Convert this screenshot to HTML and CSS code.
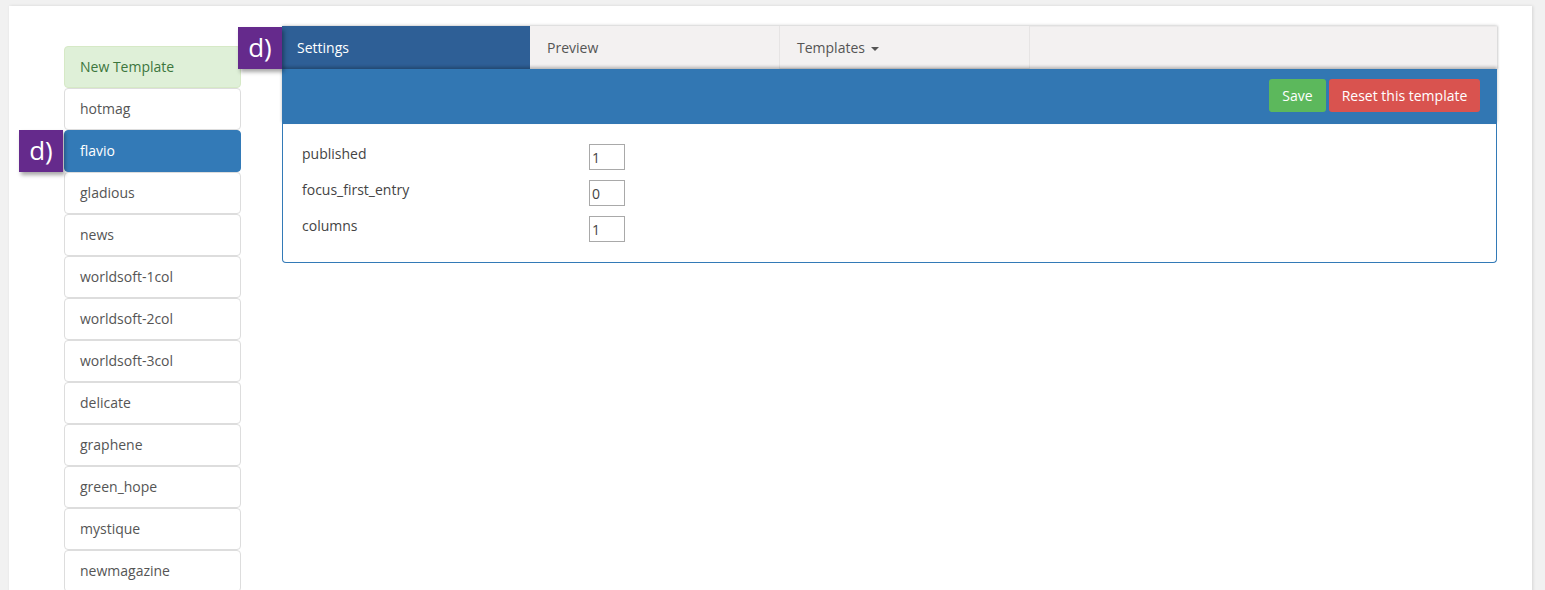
FILE: index.html
```html
<!DOCTYPE html>
<html>
<head>
<meta charset="utf-8">
<link rel="stylesheet" href="styles.css">
</head>
<body>
<div class="page">
  <ul class="tpl-list">
    <li class="tpl new">New Template</li>
    <li class="tpl">hotmag</li>
    <li class="tpl active">flavio<span class="badge badge-left">d)</span></li>
    <li class="tpl">gladious</li>
    <li class="tpl">news</li>
    <li class="tpl">worldsoft-1col</li>
    <li class="tpl">worldsoft-2col</li>
    <li class="tpl">worldsoft-3col</li>
    <li class="tpl">delicate</li>
    <li class="tpl">graphene</li>
    <li class="tpl">green_hope</li>
    <li class="tpl">mystique</li>
    <li class="tpl">newmagazine</li>
    <li class="tpl">magazine</li>
  </ul>
  <div class="main">
    <div class="tabs">
      <span class="badge badge-tab">d)</span>
      <div class="tab current">Settings</div>
      <div class="tab">Preview</div>
      <div class="tab dropdown">Templates <span class="caret"></span></div>
      <div class="tab-rest"></div>
    </div>
    <div class="panel-head">
      <button class="btn btn-save">Save</button>
      <button class="btn btn-reset">Reset this template</button>
    </div>
    <div class="panel-body">
      <div class="row"><label>published</label><input class="field" value="1"></div>
      <div class="row"><label>focus_first_entry</label><input class="field" value="0"></div>
      <div class="row"><label>columns</label><input class="field" value="1"></div>
    </div>
  </div>
</div>
</body>
</html>
```
FILE: styles.css
```css
* { box-sizing: border-box; }
html, body { margin: 0; padding: 0; }
body {
  background: #f1f1f1;
  font-family: "Open Sans", "Liberation Sans", sans-serif;
  font-size: 14px;
  color: #333;
  height: 590px;
  overflow: hidden;
}
.page {
  margin: 6px 13px 0 9px;
  background: #fff;
  box-shadow: 1px 0 3px rgba(0,0,0,0.12);
  padding: 20px 0 0 55px;
  display: flex;
  align-items: flex-start;
  gap: 41px;
  min-height: 700px;
}
.tpl-list {
  list-style: none;
  margin: 20px 0 0 0;
  padding: 0;
  width: 177px;
  flex: none;
}
.tpl {
  position: relative;
  height: 42px;
  line-height: 40px;
  padding-left: 15px;
  border: 1px solid #ddd;
  border-radius: 4px;
  color: #555;
  background: #fff;
}
.tpl.new {
  background: #dff0d8;
  color: #3c763d;
  border-color: #d6e9c6;
}
.tpl.active {
  background: #337ab7;
  border-color: #337ab7;
  color: #fff;
}
.badge {
  position: absolute;
  width: 44px;
  height: 42px;
  background: #652a8c;
  color: #fff;
  font-size: 26px;
  line-height: 40px;
  text-align: center;
  box-shadow: 2px 3px 4px rgba(0,0,0,0.35);
  font-family: "Open Sans", "Liberation Sans", sans-serif;
  z-index: 2;
}
.badge-left { left: -46px; top: -1px; }
.badge-tab { left: -44px; top: 1px; }
.main {
  width: 1215px;
  flex: none;
}
.tabs {
  position: relative;
  display: flex;
  height: 43px;
  background: #f3f1f1;
  box-shadow: 0 -1px 3px rgba(0,0,0,0.12), 1px 0 2px rgba(0,0,0,0.15);
}
.tab {
  width: 250px;
  padding-left: 17px;
  line-height: 43px;
  color: #555;
  border-right: 1px solid #e6e4e4;
}
.tab.current {
  width: 248px;
  padding-left: 15px;
  background: #2e5f96;
  color: #fff;
  border-right: none;
}
.tab.dropdown { border-bottom: 1px solid #e2e0e0; }
.caret {
  display: inline-block;
  width: 0;
  height: 0;
  margin-left: 2px;
  vertical-align: middle;
  border-top: 4px solid #555;
  border-left: 4px solid transparent;
  border-right: 4px solid transparent;
}
.tab-rest { flex: 1; border-top: 1px solid #ebe9e9; }
.panel-head {
  height: 55px;
  background: #3277b3;
  display: flex;
  justify-content: flex-end;
  align-items: flex-start;
  gap: 3px;
  padding: 10px 17px 0 0;
  box-shadow: 0 -2px 3px rgba(0,0,0,0.25);
  position: relative;
}
.btn {
  height: 33px;
  border: none;
  border-radius: 3px;
  color: #fff;
  font-family: "Open Sans", "Liberation Sans", sans-serif;
  font-size: 14px;
  padding: 0 12px;
}
.btn-save { background: #5cb85c; width: 57px; }
.btn-reset { background: #d9534f; width: 151px; }
.panel-body {
  border: 1px solid #337ab7;
  border-top: none;
  border-radius: 0 0 4px 4px;
  padding: 20px 19px 20px;
  display: flex;
  flex-direction: column;
  gap: 10px;
}
.row {
  display: flex;
  align-items: flex-start;
  height: 26px;
}
.row label {
  width: 287px;
  color: #444;
  line-height: 20px;
}
.field {
  width: 36px;
  height: 26px;
  border: 1px solid #a9a9a9;
  padding: 0 2px;
  font-family: "Open Sans", "Liberation Sans", sans-serif;
  font-size: 14px;
  color: #444;
}
```
